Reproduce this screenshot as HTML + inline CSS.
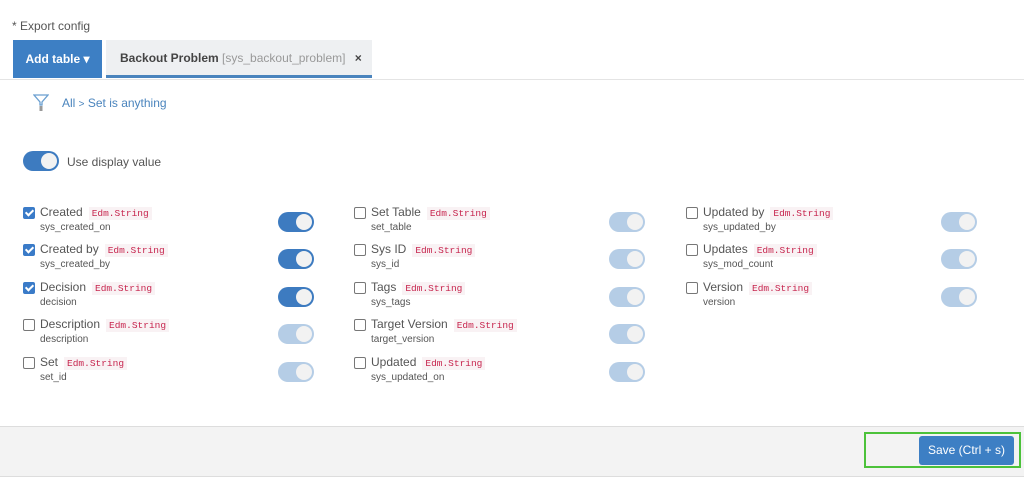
<html><head><style>
body{margin:0;width:1024px;height:480px;background:#fff;font-family:"Liberation Sans",sans-serif;position:relative;overflow:hidden;color:#555}
.a{position:absolute}
.lbl{font-size:12px;color:#555}
.sub{font-size:10px;color:#555}
.tag{font-family:"Liberation Mono",monospace;font-size:9.5px;color:#c7254e;background:#f9f2f4;padding:1px 3px;margin-left:6px}
.cb{position:absolute;width:10px;height:10px;border:1px solid #777;border-radius:2px;background:#fff}
.cb.on{background:#3a7bc8;border-color:#3a7bc8}
.cb.on:after{content:"";position:absolute;left:3px;top:0px;width:3px;height:6px;border:solid #fff;border-width:0 2px 2px 0;transform:rotate(45deg)}
.tg{position:absolute;width:36px;height:20px;border-radius:10px;background:#3d7bc0}
.tg.off{background:#b5cde6}
.tg:after{content:"";position:absolute;right:2px;top:2px;width:16px;height:16px;border-radius:8px;background:#f2f2f2}
</style></head><body>
<div class="a" style="left:12px;top:19px;font-size:12px;color:#555">* Export config</div>
<div class="a" style="left:13px;top:40px;width:89px;height:38px;background:#3d7fc4;color:#fff;font-weight:bold;font-size:12px;line-height:38px;text-align:center">Add table ▾</div>
<div class="a" style="left:106px;top:40px;width:266px;height:35px;background:#eef0f2;border-bottom:3px solid #4a84bd;font-size:12px;line-height:36px;color:#444;text-indent:14px"><b>Backout Problem</b> <span style="color:#999">[sys_backout_problem]</span> <span style="margin-left:6px;font-weight:bold">×</span></div>
<div class="a" style="left:0;top:79px;width:1024px;height:1px;background:#e4e4e4"></div>
<svg class="a" style="left:33px;top:94px" width="16" height="18" viewBox="0 0 16 18"><path d="M1 1H15L9 8V11H7V8Z" fill="none" stroke="#6a9fd0" stroke-width="1.3"/><rect x="6.5" y="12" width="3" height="5" fill="#999"/></svg>
<div class="a" style="left:62px;top:96px;font-size:12px;color:#4a84bd">All <span style="font-size:10px">&gt;</span> Set is anything</div>
<div class="tg" style="left:23px;top:151px"></div>
<div class="a lbl" style="left:67px;top:155px">Use display value</div>
<div id="g"></div>
<div class="a" style="left:0;top:426px;width:1024px;height:49px;background:#f3f3f3;border-top:1px solid #ddd;border-bottom:1px solid #ddd"></div>
<div class="a" style="left:864px;top:432px;width:153px;height:32px;border:2px solid #4cc23a"></div>
<div class="a" style="left:919px;top:436px;width:95px;height:29px;background:#3d7fc4;border-radius:3px;color:#fff;font-size:12px;line-height:29px;text-align:center">Save (Ctrl + s)</div>
<script>
var cols=[[23,278,[["Created","sys_created_on",1],["Created by","sys_created_by",1],["Decision","decision",1],["Description","description",0],["Set","set_id",0]]],
[354,609,[["Set Table","set_table",0],["Sys ID","sys_id",0],["Tags","sys_tags",0],["Target Version","target_version",0],["Updated","sys_updated_on",0]]],
[686,941,[["Updated by","sys_updated_by",0],["Updates","sys_mod_count",0],["Version","version",0]]]];
var ys=[212,249,287,324,362],h="";
cols.forEach(function(c){c[2].forEach(function(r,i){var y=ys[i];
h+='<div class="cb'+(r[2]?' on':'')+'" style="left:'+c[0]+'px;top:'+(y-5)+'px"></div>';
h+='<div class="a lbl" style="left:'+(c[0]+17)+'px;top:'+(y-7)+'px">'+r[0]+'<span class="tag">Edm.String</span></div>';
h+='<div class="a sub" style="left:'+(c[0]+17)+'px;top:'+(y+10)+'px">'+r[1]+'</div>';
h+='<div class="tg'+(r[2]?'':' off')+'" style="left:'+c[1]+'px;top:'+(y)+'px"></div>';});});
document.getElementById("g").innerHTML=h;
</script>
</body></html>
